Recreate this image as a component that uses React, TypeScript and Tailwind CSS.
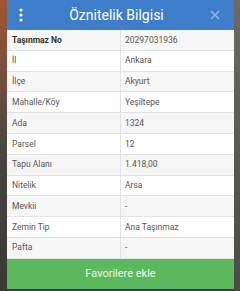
import React from 'react';

const rows: [string, string][] = [
  ['Taşınmaz No', '20297031936'],
  ['İl', 'Ankara'],
  ['İlçe', 'Akyurt'],
  ['Mahalle/Köy', 'Yeşiltepe'],
  ['Ada', '1324'],
  ['Parsel', '12'],
  ['Tapu Alanı', '1.418,00'],
  ['Nitelik', 'Arsa'],
  ['Mevkii', '-'],
  ['Zemin Tip', 'Ana Taşınmaz'],
  ['Pafta', '-'],
];

const App = () => {
  return (
    <div
      className="w-[240px] h-[291px] overflow-hidden bg-[#3b3b38] flex"
      style={{ fontFamily: 'Roboto, "Noto Sans", sans-serif' }}
    >
      <div className="w-[7px] bg-gradient-to-b from-[#a5532c] via-[#4a4642] to-[#3a3835]" />
      <div className="w-[227px] flex flex-col">
        <div className="h-[30px] bg-[#3e7dc9] flex items-center px-[11px] relative">
          <svg width="4" height="14" viewBox="0 0 4 14" className="ml-[1px]">
            <circle cx="2" cy="2" r="1.6" fill="#fff" />
            <circle cx="2" cy="7" r="1.6" fill="#fff" />
            <circle cx="2" cy="12" r="1.6" fill="#fff" />
          </svg>
          <div className="flex-1 text-center text-white text-[14px] leading-none">Öznitelik Bilgisi</div>
          <svg width="10" height="10" viewBox="0 0 10 10" className="mr-[3px]">
            <path d="M1 1 L9 9 M9 1 L1 9" stroke="#8fb4e2" strokeWidth="1.6" />
          </svg>
        </div>
        <div className="flex flex-col">
          {rows.map(([k, v], i) => (
            <div
              key={k}
              className={`h-[20.8px] flex border-b border-[#e2e2e2] text-[8.5px] ${
                i % 2 === 0 ? 'bg-[#f6f6f6]' : 'bg-white'
              }`}
            >
              <div
                className={`w-[114px] pl-[5px] flex items-center border-r border-[#e2e2e2] ${
                  i === 0 ? 'font-bold text-[#333]' : 'text-[#555]'
                }`}
              >
                {k}
              </div>
              <div className="flex-1 pl-[4px] flex items-center text-[#555]">{v}</div>
            </div>
          ))}
        </div>
        <div className="h-[30px] bg-[#5cb85c] flex items-center justify-center text-[#eef7ee] text-[11px]">
          Favorilere ekle
        </div>
      </div>
      <div className="flex-1 bg-gradient-to-b from-[#6a6a66] to-[#4a4a46]" />
    </div>
  );
};

export default App;
